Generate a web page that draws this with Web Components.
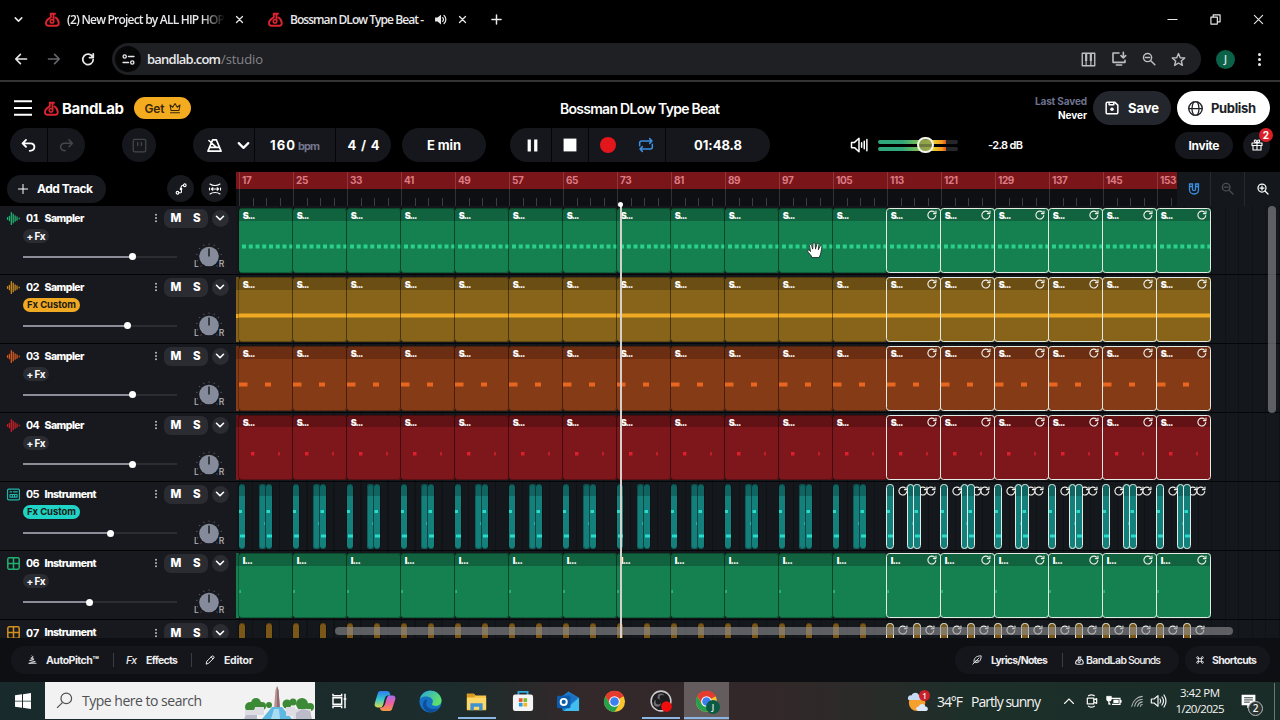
<!DOCTYPE html>
<html lang="en">
<head>
<meta charset="utf-8">
<title>BandLab Studio</title>
<style>
    html, body { margin: 0; padding: 0; background: #000; }
    body { width: 1280px; height: 720px; overflow: hidden; }
</style>
</head>
<body>
<daw-page></daw-page>

<script>
const UI = `'Inter', 'Liberation Sans', sans-serif`
const SYS = `'Open Sans', 'Noto Sans', sans-serif`

const flame = `<path d="M9 2.800h7M13.600 3v9.500M9.300 4v4.500C5.500 10.500 1.500 14.500 1.500 18c0 2.800 1.500 4 4.500 4h12c2.800 0 4-1.500 4-4 0-3.500-1.800-7-5-9.200" fill="none" stroke="currentColor" stroke-width="3" stroke-linecap="round" stroke-linejoin="round"/><circle cx="11.200" cy="14.800" r="2.800" fill="none" stroke="currentColor" stroke-width="2.600"/>`
const chrome = `<circle cx="12" cy="12" r="11" fill="#fbc52d"/><path d="M12 12 2.500 6.500A11 11 0 0 1 21.500 6.500z" fill="#e33b2e"/><path d="M12 6.500h9.700A11 11 0 0 0 2.500 6.500L7 14z" fill="#e33b2e"/><path d="M2.500 6.500A11 11 0 0 0 12 23l5-8.500L12 17 7 14.500z" fill="#25a04d"/><circle cx="12" cy="12" r="5.600" fill="#fff"/><circle cx="12" cy="12" r="4.500" fill="#3d7ff0"/>`

const stroke = (d, w = 2) => `<path d="${d}" fill="none" stroke="currentColor" stroke-width="${w}" stroke-linecap="round" stroke-linejoin="round"/>`
const bars = 'M1 10.500v3M4.500 8v8M8 1v22M11.500 4v16M15 7v10M18.500 9v6M22.500 11.500v1'

const ICONS = {
    flame,
    chrome,
    down: stroke('M6 9l6 6 6-6', 2.8),
    up: stroke('M3 17l9-9 9 9', 2.2),
    close: stroke('M4 4l16 16M20 4L4 20', 3.4),
    winclose: stroke('M3 3l18 18M21 3L3 21', 2.4),
    plus: stroke('M12 2v20M2 12h20', 3.2),
    thinplus: stroke('M12 1v22M1 12h22', 2.4),
    min: stroke('M2 12h20', 2.6),
    restore: stroke('M2 7h14v15H2zM7 6V2h15v15h-5', 2.6),
    back: stroke('M21.500 12H3M11 4L3 12l8 8', 2.8),
    forward: stroke('M2.500 12H21M13 4l8 8-8 8', 2.8),
    reload: stroke('M20 8.500A9 9 0 1 0 21 13M21 3v6.500h-6.500', 3),
    tune: stroke('M12 6.500h10M2 17.500h10', 2.8) + '<circle cx="5" cy="6.500" r="3" fill="none" stroke="currentColor" stroke-width="2.500"/><circle cx="19" cy="17.500" r="3" fill="none" stroke="currentColor" stroke-width="2.500"/>',
    speaker: '<path d="M2 8.500h4.500L13 3v18l-6.500-5.500H2z" fill="currentColor"/>' + stroke('M16 8.500c2 2 2 5 0 7M18.500 4.500c4.500 4 4.500 11 0 15', 2.3),
    piano: stroke('M2 2h20v20H2z', 2.2) + '<path d="M6.500 2h3.500v12.500H6.500zM14 2h3.500v12.500H14z" fill="currentColor"/>' + stroke('M8.200 14v8M15.800 14v8', 1.8),
    install: stroke('M12 3H3v14h18v-3M8 21h8M18.500 2v8M15 7l3.500 3.500L22 7', 2.4),
    zoomout: stroke('M15 15l7 7M6 9.500h7', 2.5) + '<circle cx="9.500" cy="9.500" r="7" fill="none" stroke="currentColor" stroke-width="2.500"/>',
    zoomin: stroke('M16 16l6 6M6 10h8M10 6v8', 2.5) + '<circle cx="10" cy="10" r="8" fill="none" stroke="currentColor" stroke-width="2.500"/>',
    star: stroke('M12 2.500l2.800 6.600 7.200.6-5.500 4.700 1.700 7-6.200-3.800-6.200 3.800 1.700-7L2 9.700l7.200-.6z', 2.3),
    dots: '<circle cx="12" cy="4" r="2.400" fill="currentColor"/><circle cx="12" cy="12" r="2.400" fill="currentColor"/><circle cx="12" cy="20" r="2.400" fill="currentColor"/>',
    menu: '<path d="M0 3h24M0 12h24M0 21h24" stroke="currentColor" stroke-width="2.800"/>',
    crown: stroke('M3 21.500h18M4 17L2 6l5.500 4.500L12 3l4.500 7.500L22 6l-2 11z', 2.1),
    undo: stroke('M8 3L2.500 8.500 8 14M3 8.500h12c9 0 8.500 12-1 12', 3),
    redo: stroke('M16 3l5.500 5.500L16 14M21 8.500H9c-9 0-8.500 12 1 12', 2.4),
    box: stroke('M2 4.500c0-1.500 1-2.500 2.500-2.500h15c1.500 0 2.500 1 2.500 2.500v15c0 1.500-1 2.500-2.500 2.500h-15C3 22 2 21 2 19.500zM9 7v5M15 7v5', 2),
    metronome: stroke('M9 3h6l7.500 18h-21zM3 4l12 11M6 15h12', 2.6),
    pause: '<path d="M3 1h6v22H3zM15 1h6v22h-6z" fill="currentColor"/>',
    stop: '<path d="M1 1h22v22H1z" fill="currentColor"/>',
    rec: '<circle cx="12" cy="12" r="12" fill="#e3171b"/>',
    loop: stroke('M2.500 13V9c0-2 1-3 3-3H21M17.500 2.500L21 6l-3.500 3.500M21.500 11v4c0 2-1 3-3 3H3M6.500 14.500L3 18l3.500 3.500', 2.3),
    volume: stroke('M2 8.500h4L12 3v18l-6-5.500H2zM15.500 9v6M19 7v10M22.500 4.500v15', 2),
    save: stroke('M4.500 2h12l5.500 5v12.500c0 1.500-1 2.500-2.500 2.500h-15C3 22 2 21 2 19.500v-15C2 3 3 2 4.500 2zM7 2.500v4h8v-4', 2.6) + '<circle cx="12" cy="14" r="3" fill="currentColor"/>',
    globe: '<circle cx="12" cy="12" r="10.800" fill="none" stroke="currentColor" stroke-width="2.200"/>' + stroke('M1.500 12h21M9 1.500c-3 6-3 15 0 21M15 1.500c3 6 3 15 0 21', 2),
    gift: stroke('M2 8h20v5H2zM4 13v9h16v-9M12 8v14M12 8C7 8 5 2.500 8 2s4 4 4 6c0-2 1-6.500 4-6s1 6-4 6', 2.2),
    automation: stroke('M7.500 19.500h4c3 0 .5-7.500.5-7.500s-1-7.500 4.500-7.500', 2.2) + '<circle cx="5" cy="19.500" r="2.700" fill="none" stroke="currentColor" stroke-width="2.200"/><circle cx="12" cy="12" r="2.600" fill="currentColor"/><circle cx="19.500" cy="4.500" r="2.700" fill="none" stroke="currentColor" stroke-width="2.200"/>',
    fit: stroke('M2 2c5 4 15 4 20 0M2 22c5-4 15-4 20 0M5 12h14M7.500 9.500L5 12l2.500 2.500M16.500 9.500L19 12l-2.500 2.500M1 10v4M23 10v4', 2.3),
    magnet: '<path d="M3 2h6v11c0 3 6 3 6 0V2h6v11c0 12-18 12-18 0zM3 7h6M15 7h6" fill="none" stroke="currentColor" stroke-width="2.600"/>',
    wave: `<path d="${bars}" stroke="currentColor" stroke-width="2.400" stroke-linecap="round"/>`,
    keys: stroke('M1 4c0-1 1-2 2-2h18c1 0 2 1 2 2v16c0 1-1 2-2 2H3c-1 0-2-1-2-2zM5.500 7h3M12 7h7M5.500 12h13v5h-13zM10 12v5M14 12v5', 2.2),
    pads: stroke('M1.500 4c0-1.500 1-2.500 2.500-2.500h16c1.500 0 2.500 1 2.500 2.500v16c0 1.500-1 2.500-2.500 2.500H4c-1.500 0-2.500-1-2.500-2.500zM12 2v20M2 12h20', 2.8),
    cycle: stroke('M21 13.500A9.500 9.500 0 1 1 18 5M15.500 8.500h6v-6', 2.8),
    pitch: stroke('M12 2l3 3-6 2.500 8 2.500-11 3 14 3-16 4h18', 2),
    pencil: stroke('M3 21l1.500-6L17 2.500c2-1.500 6 2 4.500 4.500L9 19.500zM15 5l4 4', 2.4),
    feather: stroke('M2 22L17 7M5 18C3 8 10 2 22 2c0 12-6 18-16 16M9 14h7', 2.2),
    cmd: stroke('M8 8h8v8H8zM8 8H5a3 3 0 1 1 3-3zM16 8V5a3 3 0 1 1 3 3zM8 16v3a3 3 0 1 1-3-3zM16 16h3a3 3 0 1 1-3 3z', 2.6),
    windows: '<path d="M0 3.500L10.500 2v9.500H0zM12 1.800L24 0v11.500H12zM0 12.800h10.500V22L0 20.500zM12 12.800h12V24l-12-1.800z" fill="#fff"/>',
    lens: '<circle cx="14.500" cy="9" r="7.500" fill="none" stroke="currentColor" stroke-width="1.700"/><path d="M9 15l-7.500 7.500" stroke="currentColor" stroke-width="1.700"/>',
    taskview: '<path d="M3 1v3h13V1M3 23v-3h13v3M3 7h13v10H3zM21 1v22M19 9h4" fill="none" stroke="#fff" stroke-width="2.200"/>',
    copilot: '<defs><linearGradient id="a" x2="0" y2="1"><stop stop-color="#2f7bf0"/><stop offset=".5" stop-color="#34c6d0"/><stop offset="1" stop-color="#d9d94a"/></linearGradient><linearGradient id="b" x2="0" y2="1"><stop stop-color="#a76df2"/><stop offset=".5" stop-color="#ef5fa0"/><stop offset="1" stop-color="#f59a3c"/></linearGradient></defs><path d="M7 1h7c2 0 3 1 3.500 3l.5 2h-3c-2 0-3 2-4 6-1 5-2 7-4 7H4c-3 0-4-2-3-5L4 4c.5-2 1.500-3 3-3z" fill="url(#a)"/><path d="M17 23h-7c-2 0-3-1-3.500-3L6 19h2c3 0 4-3 5-7s2-6 4-6h3c3 0 4 2 3 5l-3 9c-.5 2-1.500 3-3 3z" fill="url(#b)"/>',
    edge: '<defs><linearGradient id="e" x2="1" y2=".5"><stop stop-color="#2aa5e0"/><stop offset="1" stop-color="#5fe06a"/></linearGradient></defs><circle cx="12" cy="12" r="11.500" fill="#1673c4"/><path d="M1 9C4-2 21-2 23.500 10c.5 6-5 8-9 6-2-1 0-2 0-4 0-5-9-7-13.500-3z" fill="url(#e)"/><path d="M9 10c-4 6 0 12 12 9-7 8-17 3-17-4 0-3 2-5 5-5z" fill="#0d4f9a"/>',
    folder: '<path d="M1 3h8l2 2h12v17H1z" fill="#f7c64a"/><path d="M1 3h8l2 2-2 2H1z" fill="#d99a1f"/><path d="M1 8h22v13H1z" fill="#fbd869"/><path d="M5 22v-8h14v8h-4v-4H9v4z" fill="#3f93d2"/>',
    store: '<path d="M7 6V2h10v4" fill="none" stroke="#33a7dc" stroke-width="2"/><rect x="1" y="5" width="22" height="18" rx="2.500" fill="#f4f4f4"/><path d="M7.500 9h4v4h-4z" fill="#e8502e"/><path d="M12.500 9h4v4h-4z" fill="#7bb928"/><path d="M7.500 14h4v4h-4z" fill="#20a0e0"/><path d="M12.500 14h4v4h-4z" fill="#f9b516"/>',
    outlook: '<path d="M3 8l9-6.500L23 8v14H6z" fill="#1a80d0"/><path d="M6 7l7-4 8 5-7 6z" fill="#1f6fc0"/><path d="M23 8v14H7z" fill="#41bdf0"/><rect y="6" width="14" height="13" rx="1.500" fill="#0b5cae"/><circle cx="7" cy="12.500" r="3.200" fill="none" stroke="#fff" stroke-width="2"/>',
    obs: '<circle cx="12" cy="12" r="10.800" fill="#1d1d20" stroke="#c9c9cb" stroke-width="1.700"/><circle cx="12" cy="7.500" r="3.800" fill="#66666a"/><circle cx="8" cy="14.500" r="3.800" fill="#707074"/><circle cx="13.500" cy="8.500" r="3" fill="#1d1d20"/><circle cx="9" cy="12.700" r="3" fill="#1d1d20"/><circle cx="18" cy="18" r="5.800" fill="#f20d0d"/>',
    weather: '<circle cx="11" cy="14" r="9" fill="#f5a02c"/><path d="M1 9c0-3 3-4 4-3 1-4 8-4 8 1 3 0 3 4 0 4H3C1 11 1 10 1 9z" fill="#c6daf5"/><path d="M11 22c-2-1-1-4 2-4 1-4 7-3 7 0 3 0 4 4 1 5h-9z" fill="#dbe8fa"/>',
    meet: stroke('M4 7h11v10H4zM15 10l5-2v8l-5-2M6 3c3-2 7-2 10 0M6 21c3 2 7 2 10 0', 2.2),
    battery: '<path d="M7 8h14v9H9M22.500 10.500v4" fill="none" stroke="#fff" stroke-width="1.800"/><path d="M11 10h8v5h-8z" fill="#fff"/><path d="M1 5h7v5c0 3-7 3-7 0zM4 12v5h3" fill="#fff" stroke="#fff"/>',
    wifi: stroke('M3 21C5 12 12 5 21 4M8 21c1-7 6-11 13-12M13 21c1-4 4-7 8-7.500M18 21c0-2 1-3 3-3', 1.9),
    traysound: stroke('M2 9h4l6-5v16l-6-5H2zM15 9c1.500 2 1.500 4 0 6M18 6c3 4 3 8 0 12M21 3c4 6 4 12 0 18', 1.8),
    note: '<path d="M1 1h22v17h-8l-5 5v-5H1z" fill="#fff"/><path d="M5 6h14M5 9.500h14M5 13h9" stroke="#26342f" stroke-width="1.500"/>',
    hand: '<path d="M7 22c-1-4-5-6-6-9-.5-2 2-2.500 4 .5L3.500 5c0-2.200 2.500-2.200 3 0L8 10 8.500 2.500c.3-2 2.700-2 3 0L12 10l2-7c.6-2 3-1.500 2.800.5L16 11l2.500-5c1-1.800 3-.8 2.500 1-1 5-1 10-4 15z" fill="#fff" stroke="#15251c" stroke-width="1.200"/>'
}

class UiIcon extends HTMLElement {

    connectedCallback() {
        const size = this.getAttribute('size') || 16
        const shadow = this.attachShadow({ mode: 'open' })
        shadow.innerHTML = `
            <style>
                :host { display: block; flex: none; width: ${size}px; height: ${size}px; }
                svg { display: block; width: 100%; height: 100%; overflow: visible; }
            </style>
            <svg viewBox="0 0 24 24">${ICONS[this.getAttribute('name')]}</svg>
        `
    }

}
customElements.define('ui-icon', UiIcon)

// one line of text, tracked so that it fills the width in "w"
class FitText extends HTMLElement {

    connectedCallback() {
        const shadow = this.attachShadow({ mode: 'open' })
        shadow.innerHTML = `
            <style>
                :host { display: flex; flex: none; white-space: nowrap; }
                span { flex: none; }
            </style>
            <span><slot></slot></span>
        `
        const want = Number(this.getAttribute('w'))
        const span = shadow.querySelector('span')
        const natural = span.getBoundingClientRect().width
        const count = this.textContent.length
        span.style.letterSpacing = `${(want - natural) / Math.max(count - 1, 1)}px`
        this.style.width = `${want}px`
    }

}
customElements.define('fit-text', FitText)

class BrowserBar extends HTMLElement {

    connectedCallback() {
        const shadow = this.attachShadow({ mode: 'open' })
        shadow.innerHTML = `
            <style>
                :host { display: block; height: 80px; border-bottom: 2px solid #343436; background: #000; color: #e8e8ea; font: 600 12px ${SYS}; }
                .tabs, .bar { display: flex; align-items: center; }
                .tabs { height: 38px; padding-left: 12px; }
                .red { color: #dc2430; }
                .fade { overflow: hidden; -webkit-mask-image: linear-gradient(90deg, #000 85%, transparent); mask-image: linear-gradient(90deg, #000 85%, transparent); }
                .bar { height: 42px; padding-left: 14px; }
                .url { display: flex; align-items: center; box-sizing: border-box; width: 1089px; height: 32px; margin-left: 17px; padding-left: 3px; border-radius: 16px; background: #1f2024; }
                .site { display: grid; place-items: center; width: 26px; height: 26px; border-radius: 50%; background: #060607; }
                .path { color: #85868a; }
                .tools { display: flex; align-items: center; gap: 15px; margin-left: auto; margin-right: 15px; color: #bdbec2; }
                .me { display: grid; place-items: center; width: 19px; height: 19px; margin-left: 15px; border-radius: 50%; background: #0a6248; font-size: 10px; }
            </style>
            <div class="tabs">
                <ui-icon name="down" size="13"></ui-icon>
                <ui-icon class="red" name="flame" size="15" style="margin-left:20px"></ui-icon>
                <fit-text class="fade" w="158" style="margin-left:7px">(2) New Project by ALL HIP HOP</fit-text>
                <ui-icon name="close" size="9" style="margin-left:10px"></ui-icon>
                <ui-icon class="red" name="flame" size="15" style="margin-left:24px"></ui-icon>
                <fit-text w="134" style="margin-left:7px">Bossman DLow Type Beat -</fit-text>
                <ui-icon name="speaker" size="13" style="margin-left:10px"></ui-icon>
                <ui-icon name="close" size="9" style="margin-left:11px"></ui-icon>
                <ui-icon name="plus" size="11" style="margin-left:24px"></ui-icon>
                <ui-icon name="min" size="11" style="margin-left:665px"></ui-icon>
                <ui-icon name="restore" size="11" style="margin-left:32px"></ui-icon>
                <ui-icon name="winclose" size="11" style="margin-left:32px"></ui-icon>
            </div>
            <div class="bar">
                <ui-icon name="back" size="14"></ui-icon>
                <ui-icon name="forward" size="14" style="margin-left:19px;color:#66676b"></ui-icon>
                <ui-icon name="reload" size="14" style="margin-left:20px"></ui-icon>
                <div class="url">
                    <div class="site"><ui-icon name="tune" size="13"></ui-icon></div>
                    <fit-text w="74" style="margin-left:6px;font-size:13px">bandlab.com</fit-text>
                    <fit-text class="path" w="42" style="font-size:13px;font-weight:400">/studio</fit-text>
                    <div class="tools">
                        <ui-icon name="piano" size="15"></ui-icon>
                        <ui-icon name="install" size="16"></ui-icon>
                        <ui-icon name="zoomout" size="14"></ui-icon>
                        <ui-icon name="star" size="15"></ui-icon>
                    </div>
                </div>
                <div class="me">J</div>
                <ui-icon name="dots" size="15" style="margin-left:17px"></ui-icon>
            </div>
        `
    }

}
customElements.define('browser-bar', BrowserBar)

class StudioHeader extends HTMLElement {

    connectedCallback() {
        const shadow = this.attachShadow({ mode: 'open' })
        shadow.innerHTML = `
            <style>
                :host { display: block; box-sizing: border-box; height: 90px; padding-top: 9px; background: #000; color: #fff; font: 700 13px ${UI}; }
                .row { display: flex; align-items: center; height: 34px; margin-bottom: 3px; }
                .get { display: flex; align-items: center; justify-content: center; gap: 4px; width: 57px; height: 22px; margin-left: 10px; border-radius: 11px; background: #f3ab1f; color: #38270a; font-size: 12px; font-weight: 600; }
                .saved { display: grid; gap: 1px; justify-items: end; margin-left: 315px; font-size: 10px; line-height: 13px; }
                .saved .dim { color: #6f7390; }
                .pill { display: flex; align-items: center; box-sizing: border-box; height: 34px; border-radius: 17px; background: #15171c; }
                .cell { display: flex; align-items: center; justify-content: center; height: 100%; box-sizing: border-box; }
                .cell + .cell.line { border-left: 1.500px solid #050506; }
                .save { width: 78px; gap: 9px; padding-left: 12px; margin-left: 6px; background: #24262d; }
                .publish { width: 93px; gap: 8px; padding-left: 11px; margin-left: 6px; background: #fff; color: #202127; }
                .meter { position: relative; display: grid; gap: 3px; width: 80px; margin-left: 10px; }
                .meter i { height: 4px; border-radius: 2px; background: linear-gradient(90deg, #2fa67b 0 30%, #7fbf52 52%, #e8d22f 68%, #f09a20 80%, #e25a1c 84.500%, #26272b 85%); }
                .meter b { position: absolute; left: 39px; top: -3px; width: 12.500px; height: 12.500px; border: 2px solid #f2f5e8; border-radius: 50%; background: #8b9a4ecc; }
                .gift { position: relative; display: grid; place-items: center; width: 27px; height: 27px; margin-left: 10px; border-radius: 50%; background: #15171c; }
                .gift b { position: absolute; left: 16px; top: -4px; width: 14px; height: 14px; border-radius: 50%; background: #dc1f26; font: 700 10px/14px ${UI}; text-align: center; }
            </style>
            <div class="row">
                <ui-icon name="menu" size="18" style="margin-left:14px"></ui-icon>
                <ui-icon name="flame" size="15" style="margin-left:12px;color:#dc2430"></ui-icon>
                <fit-text w="62" style="margin-left:3px;font-size:15px">BandLab</fit-text>
                <div class="get"><fit-text w="20">Get</fit-text><ui-icon name="crown" size="12"></ui-icon></div>
                <fit-text w="160" style="margin-left:369px;font-size:14px;font-weight:600">Bossman DLow Type Beat</fit-text>
                <div class="saved">
                    <fit-text class="dim" w="52">Last Saved</fit-text>
                    <fit-text w="29">Never</fit-text>
                </div>
                <div class="pill save"><ui-icon name="save" size="14"></ui-icon><fit-text w="31">Save</fit-text></div>
                <div class="pill publish"><ui-icon name="globe" size="15"></ui-icon><fit-text w="45">Publish</fit-text></div>
            </div>
            <div class="row">
                <div class="pill" style="margin-left:10px">
                    <div class="cell" style="width:37px"><ui-icon name="undo" size="15"></ui-icon></div>
                    <div class="cell line" style="width:38px;color:#44464b"><ui-icon name="redo" size="15"></ui-icon></div>
                </div>
                <div class="pill" style="margin-left:37px;color:#44464b">
                    <div class="cell" style="width:34px"><ui-icon name="box" size="15"></ui-icon></div>
                </div>
                <div class="pill" style="margin-left:37px">
                    <div class="cell" style="width:61px;gap:12px;padding-left:12px"><ui-icon name="metronome" size="15"></ui-icon><ui-icon name="down" size="19"></ui-icon></div>
                    <div class="cell line" style="width:81px;gap:3px"><fit-text w="25">160</fit-text><fit-text w="22" style="font-size:11px;color:#73778c;padding-top:1px">bpm</fit-text></div>
                    <div class="cell line" style="width:56px"><fit-text w="32">4 / 4</fit-text></div>
                </div>
                <div class="pill" style="margin-left:11px"><div class="cell" style="width:84px"><fit-text w="34">E min</fit-text></div></div>
                <div class="pill" style="margin-left:24px">
                    <div class="cell" style="width:41px;padding-left:3px"><ui-icon name="pause" size="13"></ui-icon></div>
                    <div class="cell line" style="width:37px"><ui-icon name="stop" size="14"></ui-icon></div>
                    <div class="cell line" style="width:77px;gap:22px"><ui-icon name="rec" size="16"></ui-icon><ui-icon name="loop" size="16" style="color:#3d8fe0"></ui-icon></div>
                    <div class="cell line" style="width:105px"><fit-text w="48">01:48.8</fit-text></div>
                </div>
                <ui-icon name="volume" size="18" style="margin-left:80px"></ui-icon>
                <div class="meter"><i></i><i></i><b></b></div>
                <fit-text w="35" style="margin-left:30px;font-size:11px;font-weight:600">-2.8 dB</fit-text>
                <div class="pill" style="height:27px;margin-left:152px"><div class="cell" style="width:58px"><fit-text w="31" style="font-size:12px">Invite</fit-text></div></div>
                <div class="gift"><ui-icon name="gift" size="12"></ui-icon><b>2</b></div>
            </div>
        `
    }

}
customElements.define('studio-header', StudioHeader)

class TrackHead extends HTMLElement {

    connectedCallback() {
        const at = name => this.getAttribute(name)
        const level = Number(at('level'))
        const custom = at('fx') === 'custom'
        const ticks = [-140, -110, -80, -50, -25, 0, 25, 50, 80, 110, 140].map(a =>
            `<path d="M15 2.500v1.300" transform="rotate(${a} 15 15.500)" stroke="#5c5e66"/>`).join('')
        const shadow = this.attachShadow({ mode: 'open' })
        shadow.innerHTML = `
            <style>
                :host { display: block; box-sizing: border-box; flex: none; width: 236px; height: 69.100px; border-bottom: 1.300px solid #030304; background: #17191e; color: #fff; font: 800 10.500px ${UI}; }
                .top { display: flex; align-items: center; height: 19px; padding: 3px 0 0 7px; }
                .ms { display: flex; align-items: center; justify-content: space-between; box-sizing: border-box; width: 44px; height: 19px; padding: 0 7px 0 7px; margin-left: 3px; border-radius: 7px; background: #2a2c32; font-size: 11.500px; }
                .open { display: grid; place-items: center; width: 17px; height: 17px; margin-left: 4px; border-radius: 50%; background: #2a2c32; }
                .chip { display: flex; align-items: center; justify-content: center; width: ${custom ? 57 : 26}px; height: 14px; margin: 1px 0 0 23px; border-radius: 7px; background: ${custom ? at('chip') : '#2a2c32'}; color: ${custom ? '#1c1a12' : '#fff'}; font-size: ${custom ? 9.5 : 10}px; font-weight: 700; }
                .bottom { display: flex; align-items: center; height: 28.500px; padding-left: 23px; }
                .slider { position: relative; width: 154px; height: 2px; background: linear-gradient(90deg, #8b8d99 ${level - 23}px, #2b2d32 ${level - 23}px); }
                .slider i { position: absolute; left: ${level - 26.500}px; top: -2.500px; width: 7px; height: 7px; border-radius: 50%; background: #fff; }
                .pan { display: flex; align-items: flex-end; height: 27px; margin-left: 17px; color: #b4b6bc; font: 500 8.500px/11px ${UI}; }
                .pan svg { width: 22px; height: 27px; overflow: visible; margin: 0 -1px; }
            </style>
            <div class="top">
                <ui-icon name="${at('icon')}" size="13" style="color:${at('color')}"></ui-icon>
                <fit-text w="13.500" style="margin-left:6px;font-size:11px;font-weight:700;font-variant-numeric:tabular-nums">${at('num')}</fit-text>
                <fit-text w="${at('kind') === 'Sampler' ? 40 : 52}" style="margin-left:5px;margin-right:auto">${at('kind')}</fit-text>
                <ui-icon name="dots" size="10" style="color:#b8b9be"></ui-icon>
                <div class="ms"><span>M</span><span>S</span></div>
                <div class="open" style="margin-right:7.500px"><ui-icon name="down" size="14"></ui-icon></div>
            </div>
            <div class="chip"><fit-text w="${custom ? 49 : 19}">${custom ? 'Fx Custom' : '+ Fx'}</fit-text></div>
            <div class="bottom">
                <div class="slider"><i></i></div>
                <div class="pan"><span>L</span>
                    <svg viewBox="4 2 22 27">${ticks}<circle cx="15" cy="15.500" r="9.800" fill="#858b9b"/><path d="M15 7.500v8" stroke="#14161a" stroke-width="1.400"/></svg>
                <span>R</span></div>
            </div>
        `
    }

}
customElements.define('track-head', TrackHead)

// notes are drawn in clip pixels: x, y, width, height, opacity
class MusicClip extends HTMLElement {

    connectedCallback() {
        const at = name => this.getAttribute(name)
        const selected = this.hasAttribute('selected')
        const notes = JSON.parse(at('notes') || '[]')
        const rects = notes.map(([x, y, w, h, o = 1]) =>
            `<rect x="${x}" y="${y}" width="${w}" height="${h}" opacity="${o}" fill="${at('ink')}"/>`).join('')
        const loops = (at('loops') || '').split(' ').filter(Boolean).map(x =>
            `<ui-icon class="loop" name="cycle" size="10" style="left:${x}px"></ui-icon>`).join('')
        const label = at('label') ? `<fit-text w="${at('label')[0] === 'I' ? 10 : 12.5}">${at('label')}</fit-text>` : ''
        const shadow = this.attachShadow({ mode: 'open' })
        shadow.innerHTML = `
            <style>
                :host { position: relative; display: block; flex: none; box-sizing: border-box; width: ${at('w')}px; height: 65px; color: #fff; }
                .box { height: 65px; box-sizing: border-box; overflow: hidden; padding: 1.500px 0 0 4px; border-radius: 3px; background: linear-gradient(${at('head')} 12.500px, ${at('body')} 12.500px); font: 900 9px/11px ${UI}; }
                svg { position: absolute; left: 0; top: 0; width: 100%; height: 65px; }
                .edge { position: absolute; inset: 0 -.5px 0 -.5px; box-sizing: border-box; border-radius: 3.500px; border: ${selected ? '1.500px solid #e3ece4' : '.5px solid #00000044'}; }
                .loop { position: absolute; top: 2px; color: #f0efe9; }
            </style>
            <div class="box">${label}</div>
            <svg>${rects}</svg>
            <div class="edge"></div>
            ${loops}
        `
    }

}
customElements.define('music-clip', MusicClip)

const GREEN = { head: '#11633f', body: '#158050', ink: '#2bd18a' }
const GOLD = { head: '#6a4e14', body: '#876419', ink: '#f0a922' }
const RUST = { head: '#6b2e13', body: '#853b16', ink: '#e8661f' }
const RED = { head: '#621114', body: '#7d171b', ink: '#e01f2c' }
const TEAL = { head: '#0f6562', body: '#14807b', ink: '#25dccd' }

const pulses = Array.from({ length: 8 }, (_, i) => [3 + i * 6.75, 36.5, 4, 4])
const TRACKS = [
    { icon: 'wave', kind: 'Sampler', color: '#22b070', level: 132, skin: GREEN, label: 'S...', notes: pulses, lead: false },
    { icon: 'wave', kind: 'Sampler', color: '#c88a20', level: 127, fx: 'custom', chip: '#f0a922', skin: GOLD, label: 'S...', notes: [[0, 36.5, 54, 4]], lead: true },
    { icon: 'wave', kind: 'Sampler', color: '#d6591f', level: 132, skin: RUST, label: 'S...', notes: [[0, 36.5, 8.5, 4], [26, 36.5, 6, 4]], lead: true },
    { icon: 'wave', kind: 'Sampler', color: '#c81f28', level: 132, skin: RED, label: 'S...', notes: [[12, 37, 3.5, 3.5], [39, 37, 2, 3.5, .7]], lead: true },
    { icon: 'keys', kind: 'Instrument', color: '#1fb5a8', level: 110, fx: 'custom', chip: '#1fd3c6', skin: TEAL, parts: [
        { at: 0, loops: '11.500', notes: [[0, 26, 3, 3], [1, 50.5, 5.5, 3]] },
        { at: 20.5, loops: '11', notes: [[5, 38, 1, 3, .6]] },
        { at: 27, loops: '12', notes: [[.5, 26, 3.5, 3], [1, 50.5, 5.5, 3]] }] },
    { icon: 'pads', kind: 'Instrument', color: '#22b070', level: 89, skin: GREEN, label: 'I...', notes: [[.5, 37, 1.2, 3]], lead: true },
    { icon: 'pads', kind: 'Instrument', color: '#d0901f', level: 110, skin: { head: '#7a5716', body: '#7a5716', ink: '#f0a922' }, parts: [
        { at: 0, loops: '11.500', notes: [] },
        { at: 27, loops: '11.500', notes: [] }] }
]

class ClipLane extends HTMLElement {

    connectedCallback() {
        const track = TRACKS[Number(this.getAttribute('track'))]
        const { head, body, ink } = track.skin
        const clip = (w, notes, label, selected, loops) =>
            `<music-clip w="${w}" head="${head}" body="${body}" ink="${ink}" label="${label}" notes='${JSON.stringify(notes)}' ${selected ? `selected loops="${loops}"` : ''}></music-clip>`
        let html = ''
        for (let i = 0; i < 18; i++) {
            const selected = i >= 12
            if (!track.parts) {
                html += clip(54, track.notes, track.label, selected, '40.500')
                continue
            }
            let x = 0
            html += '<div class="seg">'
            for (const part of track.parts) {
                html += `<div style="width:${part.at - x}px"></div>` + clip(6.5, part.notes, '', selected, part.loops)
                x = part.at + 6.5
            }
            html += '</div>'
        }
        const shadow = this.attachShadow({ mode: 'open' })
        shadow.innerHTML = `
            <style>
                :host { display: flex; flex: none; box-sizing: border-box; height: 69.100px; padding-top: 2.500px; border-bottom: 1.300px solid #050607; }
                .seg { display: flex; flex: none; width: 54px; }
                .lead { flex: none; width: 2.800px; height: 65px; background: ${track.lead ? `linear-gradient(${head} 12.500px, ${body} 12.500px)` : 'none'}; }
                .lead i { display: block; height: 4px; margin-top: 36.500px; background: ${this.getAttribute('track') === '1' ? ink : 'none'}; }
            </style>
            <div class="lead"><i></i></div>${html}
        `
    }

}
customElements.define('clip-lane', ClipLane)

class StudioTimeline extends HTMLElement {

    connectedCallback() {
        let marks = ''
        for (let bar = 17; bar <= 153; bar += 8) marks += `<div class="mark"><span>${bar}</span><i></i><i></i><i></i></div>`
        const heads = TRACKS.map((t, i) =>
            `<track-head num="0${i + 1}" icon="${t.icon}" kind="${t.kind}" color="${t.color}" chip="${t.chip || ''}" level="${t.level}" fx="${t.fx || ''}"></track-head>`).join('')
        const lanes = TRACKS.map((t, i) => `<clip-lane track="${i}"></clip-lane>`).join('')
        const shadow = this.attachShadow({ mode: 'open' })
        shadow.innerHTML = `
            <style>
                :host { position: relative; display: grid; grid-template: 33.500px 432.500px / 236px 1044px; height: 466px; overflow: hidden; color: #fff; font: 700 12px ${UI}; }
                .add { display: flex; align-items: center; padding-left: 7px; }
                .pill { display: flex; align-items: center; gap: 9px; box-sizing: border-box; width: 99px; height: 28px; padding-left: 11px; border-radius: 14px; background: #17191e; }
                .round { display: grid; place-items: center; width: 27px; height: 27px; border-radius: 50%; background: #17191e; }
                .ruler { display: flex; overflow: hidden; background: #14181c; }
                .marks { display: flex; box-sizing: border-box; width: 941px; padding-left: 3px; overflow: hidden; background: linear-gradient(#7a1519 17px, #0d0f12 17px); }
                .mark { display: grid; grid-template: 25.500px 8px / repeat(4, 13.500px); flex: none; width: 54px; box-sizing: border-box; box-shadow: inset 1px 0 #ffffff26; color: #da7c84; font-size: 10px; font-weight: 700; line-height: 16px; }
                .mark span { grid-column: 1 / 5; padding-left: 3px; letter-spacing: -.4px; }
                .mark i { border-left: 1px solid #3c3e42; }
                .mark i:nth-of-type(1) { grid-column: 2; }
                .tool { display: grid; place-items: center; width: 34px; box-sizing: border-box; border-right: 1px solid #26292d; }
                .heads, .lanes { overflow: hidden; }
                .lanes { background: repeating-linear-gradient(90deg, transparent 0 3px, #00000038 3px 4px, transparent 4px 13.500px), #14181c; }
                .playhead { position: absolute; left: 619.500px; top: 31px; bottom: 0; width: 2px; background: #d6d0cc; }
                .playhead i { position: absolute; left: -2px; top: -1.500px; width: 5.500px; height: 5.500px; border-radius: 50%; background: #fff; }
                .bar { position: absolute; border-radius: 4px; background: #8f8f9399; }
                .hand { position: absolute; left: 807px; top: 70px; }
            </style>
            <div class="add">
                <div class="pill"><ui-icon name="thinplus" size="10"></ui-icon><fit-text w="56">Add Track</fit-text></div>
                <div class="round" style="margin-left:61px"><ui-icon name="automation" size="12"></ui-icon></div>
                <div class="round" style="margin-left:7px"><ui-icon name="fit" size="12"></ui-icon></div>
            </div>
            <div class="ruler">
                <div class="marks">${marks}</div>
                <div class="tool" style="color:#3b8edf"><ui-icon name="magnet" size="12"></ui-icon></div>
                <div class="tool" style="color:#4b4e54"><ui-icon name="zoomout" size="13"></ui-icon></div>
                <div class="tool" style="border:0;width:35px"><ui-icon name="zoomin" size="12"></ui-icon></div>
            </div>
            <div class="heads">${heads}</div>
            <div class="lanes">${lanes}</div>
            <div class="bar" style="left:335px;top:455px;width:898px;height:8px"></div>
            <div class="bar" style="left:1268px;top:34px;width:8px;height:207px"></div>
            <div class="playhead"><i></i></div>
            <ui-icon class="hand" name="hand" size="17"></ui-icon>
        `
    }

}
customElements.define('studio-timeline', StudioTimeline)

class StudioDock extends HTMLElement {

    connectedCallback() {
        const shadow = this.attachShadow({ mode: 'open' })
        shadow.innerHTML = `
            <style>
                :host { display: flex; align-items: center; height: 44px; padding: 0 10px 0 11px; background: #0d0f13; color: #ececee; font: 700 10.500px ${UI}; }
                .pill { display: flex; align-items: center; box-sizing: border-box; height: 28px; border-radius: 14px; background: #14161b; }
                hr { width: 1px; height: 14px; margin: 0; border: 0; background: #3a3c42; }
            </style>
            <div class="pill" style="width:257px;padding-left:16px">
                <ui-icon name="pitch" size="10"></ui-icon>
                <fit-text w="53" style="margin-left:9px">AutoPitch™</fit-text>
                <hr style="margin-left:14px">
                <fit-text w="11" style="margin-left:12px;font-style:italic;font-weight:500">Fx</fit-text>
                <fit-text w="32" style="margin-left:9px">Effects</fit-text>
                <hr style="margin-left:13px">
                <ui-icon name="pencil" size="10" style="margin-left:13px"></ui-icon>
                <fit-text w="29" style="margin-left:9px">Editor</fit-text>
            </div>
            <div class="pill" style="width:224px;padding-left:17px;margin-left:auto">
                <ui-icon name="feather" size="10"></ui-icon>
                <fit-text w="57" style="margin-left:9px">Lyrics/Notes</fit-text>
                <hr style="margin-left:14px">
                <ui-icon name="flame" size="9" style="margin-left:12px"></ui-icon>
                <fit-text w="41" style="margin-left:2px;font-weight:600">BandLab</fit-text>
                <fit-text w="33" style="margin-left:1px;font-weight:500">Sounds</fit-text>
            </div>
            <div class="pill" style="width:85px;padding-left:11px;margin-left:6px">
                <ui-icon name="cmd" size="8"></ui-icon>
                <fit-text w="45" style="margin-left:8px">Shortcuts</fit-text>
            </div>
        `
    }

}
customElements.define('studio-dock', StudioDock)

class TaskBar extends HTMLElement {

    connectedCallback() {
        const apps = [['taskview', 16], ['copilot', 22], ['edge', 23], ['folder', 21, 1], ['store', 22], ['outlook', 23], ['chrome', 23], ['obs', 22, 1]]
            .map(([name, size, on]) => `<div class="app${on ? ' on' : ''}"><ui-icon name="${name}" size="${size}"></ui-icon></div>`).join('')
        const shadow = this.attachShadow({ mode: 'open' })
        shadow.innerHTML = `
            <style>
                :host { display: flex; align-items: center; height: 38px; background: linear-gradient(90deg, #182a2b 0, #1d2c2c 36%, #33282a 45%, #332829 60%, #2a2b29 68%, #1c2f29 76%, #1a2c27); color: #f4f4f4; font: 500 14px ${SYS}; }
                .start { display: grid; place-items: center; width: 45px; }
                .search { display: flex; align-items: center; align-self: flex-start; width: 270px; height: 37px; background: #f2f2f2; color: #4f5052; }
                .search svg { width: 72px; height: 37px; margin-left: auto; }
                .app { position: relative; display: grid; place-items: center; width: 46px; height: 38px; }
                .app:not(.active) { left: .500px; }
                .on { background: linear-gradient(#8bb6e4, #8bb6e4) 50% 35px / 38px 2px no-repeat; }
                .active { width: 45px; margin-left: 1px; background: linear-gradient(#8bb6e4, #8bb6e4) 0 35px / 45px 2px no-repeat, #655c5d; }
                .j { position: absolute; left: 22px; top: 18px; width: 14px; height: 14px; border-radius: 50%; background: #0a5a44; font: 600 8px/14px ${SYS}; text-align: center; }
                .weather, .note { position: relative; }
                .weather b { position: absolute; left: 12px; top: 0; width: 11px; height: 11px; border-radius: 50%; background: #c8202a; font: 600 8px/11px ${SYS}; text-align: center; }
                .clock { display: grid; justify-items: center; width: 50px; margin-left: 9px; font-size: 11.500px; line-height: 16px; }
                .note b { position: absolute; left: 7px; top: 7px; width: 13px; height: 13px; border: 1px solid #bbb; border-radius: 50%; background: #2a3431; font: 600 10px/13px ${SYS}; text-align: center; }
                .peek { width: 1px; height: 37px; margin-left: 18px; background: #6d7674; }
            </style>
            <div class="start"><ui-icon name="windows" size="16"></ui-icon></div>
            <div class="search">
                <ui-icon name="lens" size="17" style="margin-left:11px"></ui-icon>
                <fit-text w="120" style="margin-left:9px">Type here to search</fit-text>
                <svg viewBox="0 0 72 37">
                    <g fill="#3c8a35"><circle cx="7" cy="25" r="5"/><circle cx="13" cy="21" r="5"/><circle cx="19" cy="24" r="4"/><circle cx="44" cy="22" r="4.500"/><circle cx="50" cy="20" r="3.500"/><circle cx="59" cy="22" r="6"/><circle cx="67" cy="25" r="4"/><circle cx="26" cy="23" r="3"/></g>
                    <path d="M31 27l1.500-19L34 4l1.500 4L37 27z" fill="#b98f8a"/><path d="M34 4l1.500 4L37 27h-3z" fill="#8c6d76"/>
                    <path d="M29 25h10l10 12H19z" fill="#5fb8e2"/><path d="M31 27h5l1 10h-9z" fill="#a6ddf3"/>
                    <path d="M2 28h12v6H2zM12 25h9v8h-9zM43 25h9v9h-9zM50 27h18v10H50z" fill="#dedde3"/>
                    <path d="M3 33h11v4H1zM53 31l6-4 8 2 2 8H53z" fill="#bcbbc9"/>
                </svg>
            </div>
            ${apps}
            <div class="app active"><ui-icon name="chrome" size="23"></ui-icon><span class="j">J</span></div>
            <div class="weather" style="margin-left:178px"><ui-icon name="weather" size="22"></ui-icon><b>1</b></div>
            <fit-text w="26" style="margin-left:8px">34°F</fit-text>
            <fit-text w="70" style="margin-left:8px">Partly sunny</fit-text>
            <ui-icon name="up" size="12" style="margin-left:22px"></ui-icon>
            <ui-icon name="meet" size="14" style="margin-left:10px"></ui-icon>
            <ui-icon name="battery" size="16" style="margin-left:7px"></ui-icon>
            <ui-icon name="wifi" size="14" style="margin-left:8px;color:#b6bcba"></ui-icon>
            <ui-icon name="traysound" size="16" style="margin-left:6px"></ui-icon>
            <div class="clock"><fit-text w="40">3:42 PM</fit-text><fit-text w="49">1/20/2025</fit-text></div>
            <div class="note" style="margin-left:16px"><ui-icon name="note" size="15"></ui-icon><b>2</b></div>
            <div class="peek"></div>
        `
    }

}
customElements.define('task-bar', TaskBar)

class DawPage extends HTMLElement {

    connectedCallback() {
        const shadow = this.attachShadow({ mode: 'open' })
        shadow.innerHTML = `
            <style>
                :host { display: flex; flex-direction: column; width: 1280px; height: 720px; overflow: hidden; background: #000; }
                :host > * { flex: none; }
            </style>
            <browser-bar></browser-bar>
            <studio-header></studio-header>
            <studio-timeline></studio-timeline>
            <studio-dock></studio-dock>
            <task-bar></task-bar>
        `
    }

}
customElements.define('daw-page', DawPage)
</script>
</body>
</html>
